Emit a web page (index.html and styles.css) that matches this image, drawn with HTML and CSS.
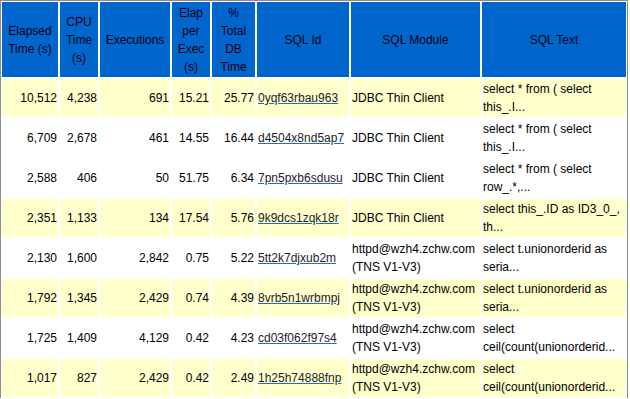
FILE: index.html
```html
<!DOCTYPE html>
<html>
<head>
<meta charset="utf-8">
<link rel="stylesheet" href="styles.css">
</head>
<body>
<div class="sqltable">
  <div class="th">Elapsed Time (s)</div>
  <div class="th">CPU Time (s)</div>
  <div class="th">Executions</div>
  <div class="th">Elap per Exec (s)</div>
  <div class="th">%<br>Total DB Time</div>
  <div class="th">SQL Id</div>
  <div class="th">SQL Module</div>
  <div class="th">SQL Text</div>

  <div class="td num alt">10,512</div><div class="td num alt">4,238</div><div class="td num alt">691</div><div class="td num alt">15.21</div><div class="td num alt">25.77</div>
  <div class="td alt"><a class="sqlid" href="#">0yqf63rbau963</a></div><div class="td alt">JDBC Thin Client</div><div class="td alt">select * from ( select this_.I...</div>

  <div class="td num">6,709</div><div class="td num">2,678</div><div class="td num">461</div><div class="td num">14.55</div><div class="td num">16.44</div>
  <div class="td"><a class="sqlid" href="#">d4504x8nd5ap7</a></div><div class="td">JDBC Thin Client</div><div class="td">select * from ( select this_.I...</div>

  <div class="td num">2,588</div><div class="td num">406</div><div class="td num">50</div><div class="td num">51.75</div><div class="td num">6.34</div>
  <div class="td"><a class="sqlid" href="#">7pn5pxb6sdusu</a></div><div class="td">JDBC Thin Client</div><div class="td">select * from ( select row_.*,...</div>

  <div class="td num alt">2,351</div><div class="td num alt">1,133</div><div class="td num alt">134</div><div class="td num alt">17.54</div><div class="td num alt">5.76</div>
  <div class="td alt"><a class="sqlid" href="#">9k9dcs1zqk18r</a></div><div class="td alt">JDBC Thin Client</div><div class="td alt">select this_.ID as ID3_0_, th...</div>

  <div class="td num">2,130</div><div class="td num">1,600</div><div class="td num">2,842</div><div class="td num">0.75</div><div class="td num">5.22</div>
  <div class="td"><a class="sqlid" href="#">5tt2k7djxub2m</a></div><div class="td">httpd@wzh4.zchw.com (TNS V1-V3)</div><div class="td">select t.unionorderid as seria...</div>

  <div class="td num alt">1,792</div><div class="td num alt">1,345</div><div class="td num alt">2,429</div><div class="td num alt">0.74</div><div class="td num alt">4.39</div>
  <div class="td alt"><a class="sqlid" href="#">8vrb5n1wrbmpj</a></div><div class="td alt">httpd@wzh4.zchw.com (TNS V1-V3)</div><div class="td alt">select t.unionorderid as seria...</div>

  <div class="td num">1,725</div><div class="td num">1,409</div><div class="td num">4,129</div><div class="td num">0.42</div><div class="td num">4.23</div>
  <div class="td"><a class="sqlid" href="#">cd03f062f97s4</a></div><div class="td">httpd@wzh4.zchw.com (TNS V1-V3)</div><div class="td">select ceil(count(unionorderid...</div>

  <div class="td num alt">1,017</div><div class="td num alt">827</div><div class="td num alt">2,429</div><div class="td num alt">0.42</div><div class="td num alt">2.49</div>
  <div class="td alt"><a class="sqlid" href="#">1h25h74888fnp</a></div><div class="td alt">httpd@wzh4.zchw.com (TNS V1-V3)</div><div class="td alt">select ceil(count(unionorderid...</div>
</div>
</body>
</html>
```
FILE: styles.css
```css
html, body {
  margin: 0;
  padding: 0;
  background: #ffffff;
}

body {
  font-family: "Liberation Sans", Arial, sans-serif;
  font-size: 12px;
  line-height: 18px;
  color: #000000;
}

.sqltable {
  box-sizing: border-box;
  width: 628px;
  display: grid;
  grid-template-columns: 56px 38px 70px 38px 43px 92px 129px 144px;
  grid-template-rows: 75px repeat(8, 38px);
  gap: 2px;
  padding: 1px 1px 1px 1px;
  border: 1px solid #8c8c8c;
  border-bottom: 0;
  background: #ffffff;
}

.th {
  background: #0066cc;
  color: #000014;
  display: flex;
  align-items: center;
  justify-content: center;
  text-align: center;
  padding: 0 1px;
}

.td {
  background: #ffffff;
  color: #000000;
  display: flex;
  align-items: center;
  padding: 0 1px;
  overflow: hidden;
}

.td.alt {
  background: #ffffcc;
}

.td.num {
  justify-content: flex-end;
  text-align: right;
}

.sqlid {
  color: #1c1c2c;
  text-decoration: underline;
  text-decoration-color: #2470b8;
}
```
